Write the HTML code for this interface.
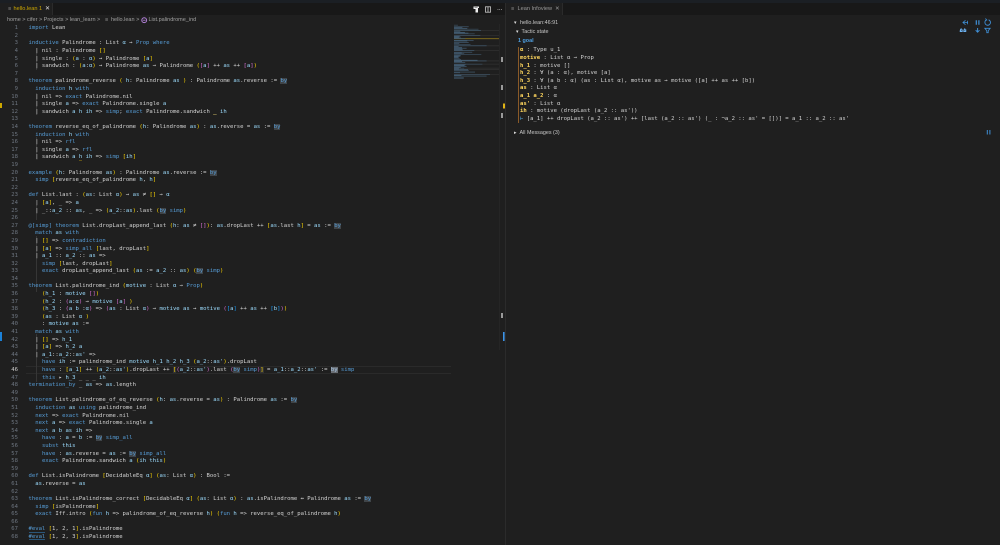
<!DOCTYPE html>
<html><head><meta charset="utf-8"><style>
html,body{margin:0;padding:0;width:1000px;height:545px;overflow:hidden;background:#1f1f1f}
*{box-sizing:border-box}
.abs{position:absolute}
.mono{font-family:"DejaVu Sans Mono","Liberation Mono",monospace;font-size:5.58px;line-height:7.59px;white-space:pre;color:#d4d4d4;filter:blur(.2px)}
.sans{font-family:"Liberation Sans","DejaVu Sans",sans-serif;white-space:pre;filter:blur(.2px)}
b,i,u,s,em,tt,mark{font:inherit;text-decoration:none;font-weight:normal;font-style:normal}
b{color:#569cd6} i{color:#9cdcfe} u{color:#ffd700} s{color:#da70d6} em{color:#179fff} tt{color:#4fa3d8}
mark{background:#3f4448;color:#569cd6}
.un{background:linear-gradient(#7d6a14,#7d6a14) bottom/100% .7px no-repeat}
.ub{background:linear-gradient(#2f6fa3,#2f6fa3) bottom/100% .7px no-repeat}
.y{color:#ffd75e;font-weight:bold}
</style></head><body>
<div class="abs" style="left:0;top:0;width:1000px;height:3px;background:#1b1f24"></div>
<div class="abs" style="left:0;top:3px;width:1000px;height:12px;background:#181818"></div>
<div class="abs" style="left:0;top:3px;width:53px;height:12px;background:#1f1f1f;border-right:.5px solid #2b2b2b"></div>
<div class="abs" style="left:505px;top:3px;width:58px;height:12px;background:#1f1f1f;border-left:.5px solid #2b2b2b;border-right:.5px solid #2b2b2b"></div>
<div class="abs sans" style="left:8px;top:5px;font-size:5.4px;line-height:8px;color:#9a9a9a">≡</div>
<div class="abs sans" style="left:13.5px;top:5px;font-size:5.6px;line-height:8px;color:#cca700">hello.lean 1</div>
<div class="abs sans" style="left:45px;top:5px;font-size:6px;line-height:8px;color:#ddd">✕</div>
<div class="abs sans" style="left:511px;top:5px;font-size:5.4px;line-height:8px;color:#9a9a9a">≡</div>
<div class="abs sans" style="left:517.5px;top:5px;font-size:5.6px;line-height:8px;color:#999">Lean Infoview</div>
<div class="abs sans" style="left:555px;top:5px;font-size:5.5px;line-height:8px;color:#999">✕</div>
<svg class="abs" style="left:470px;top:4px" width="34" height="11" viewBox="0 0 34 11">
<path d="M3.5 2.5h5.5v1.5h-1v4.5h-2.5v-3.5h-2z" fill="#eee"/><rect x="4.5" y="3" width="3" height="1" fill="#999"/>
<rect x="15.5" y="2.8" width="5" height="5.4" fill="none" stroke="#ccc" stroke-width=".8"/><path d="M18 2.8v5.4" stroke="#ccc" stroke-width=".8"/>
<path d="M27.5 5.5h.9M29.2 5.5h.9M31 5.5h.9" stroke="#aaa" stroke-width=".8"/>
</svg>
<div class="abs sans" style="left:7px;top:16.3px;font-size:5.5px;line-height:8px;color:#a0a0a0">home &gt; cifer &gt; Projects &gt; lean_learn &gt;</div>
<div class="abs sans" style="left:105px;top:16.3px;font-size:5.5px;line-height:8px;color:#a0a0a0">≡</div>
<div class="abs sans" style="left:111px;top:16.3px;font-size:5.5px;line-height:8px;color:#a0a0a0">hello.lean &gt;</div>
<svg class="abs" style="left:141px;top:17px" width="7" height="7"><circle cx="3.2" cy="3.2" r="2.4" fill="none" stroke="#b180d7" stroke-width="1"/><path d="M1.8 3.2h2.8" stroke="#b180d7" stroke-width=".8"/></svg>
<div class="abs sans" style="left:148.5px;top:16.3px;font-size:5.5px;line-height:8px;color:#a0a0a0">List.palindrome_ind</div>

<div class="abs" style="left:0;top:103px;width:1.5px;height:5px;background:#cca700"></div>
<div class="abs" style="left:0;top:332px;width:1.5px;height:9px;background:#1b81d8"></div>

<div class="abs" style="left:26px;top:365.6px;width:425px;height:8.2px;border-top:.5px solid #2a2a2a;border-bottom:.5px solid #2a2a2a"></div>
<div class="abs" style="left:35.5px;top:48px;width:.5px;height:22px;background:#363636"></div>
<div class="abs" style="left:35.5px;top:93px;width:.5px;height:22px;background:#363636"></div>
<div class="abs" style="left:35.5px;top:137px;width:.5px;height:22px;background:#363636"></div>
<div class="abs" style="left:35.5px;top:205px;width:.5px;height:15px;background:#363636"></div>
<div class="abs" style="left:35.5px;top:236px;width:.5px;height:56px;background:#363636"></div>
<div class="abs" style="left:35.5px;top:334px;width:.5px;height:48px;background:#363636"></div>

<div class="abs mono" style="left:0;top:25.3px;width:18px;text-align:right;color:#6e7681">1
2
3
4
5
6
7
8
9
10
11
12
13
14
15
16
17
18
19
20
21
22
23
24
25
26
27
28
29
30
31
32
33
34
35
36
37
38
39
40
41
42
43
44
45
<span style="color:#ccc">46</span>
47
48
49
50
51
52
53
54
55
56
57
58
59
60
61
62
63
64
65
66
67
68</div>

<div class="abs mono" style="left:28.5px;top:25.3px"><b>import</b> Lean

<b>inductive</b> Palindrome : List <i>α</i> → <b>Prop</b> <b>where</b>
  | nil : Palindrome <u>[]</u>
  | single : <u>(</u><i>a</i> : <i>α</i><u>)</u> → Palindrome <u>[</u><i>a</i><u>]</u>
  | sandwich : <u>(</u><i>a</i>:<i>α</i><u>)</u> → Palindrome <i>as</i> → Palindrome <u>(</u><s>[</s><i>a</i><s>]</s> ++ <i>as</i> ++ <s>[</s><i>a</i><s>]</s><u>)</u>

<b>theorem</b> palindrome_reverse <u>(</u> <i>h</i>: Palindrome <i>as</i> <u>)</u> : Palindrome <i>as</i>.reverse := <mark>by</mark>
  <b>induction</b> <i>h</i> <b>with</b>
  | nil =&gt; <b>exact</b> Palindrome.nil
  | single <i>a</i> =&gt; <b>exact</b> Palindrome.single <i>a</i>
  | sandwich <i>a</i> <i>h</i> <i>ih</i> =&gt; <b>simp</b>; <b>exact</b> Palindrome.sandwich <span class="un">_</span> <i>ih</i>

<b>theorem</b> reverse_eq_of_palindrome <u>(</u><i>h</i>: Palindrome <i>as</i><u>)</u> : <i>as</i>.reverse = <i>as</i> := <mark>by</mark>
  <b>induction</b> <i>h</i> <b>with</b>
  | nil =&gt; <b>rfl</b>
  | single <i>a</i> =&gt; <b>rfl</b>
  | sandwich <i>a</i> <i class="un">h</i> <i>ih</i> =&gt; <b>simp</b> <u>[</u><i>ih</i><u>]</u>

<b>example</b> <u>(</u><i>h</i>: Palindrome <i>as</i><u>)</u> : Palindrome <i>as</i>.reverse := <mark>by</mark>
  <b>simp</b> <u>[</u>reverse_eq_of_palindrome <i>h</i>, <i>h</i><u>]</u>

<b>def</b> List.last : <u>(</u><i>as</i>: List <i>α</i><u>)</u> → <i>as</i> ≠ <u>[]</u> → <i>α</i>
  | <u>[</u><i>a</i><u>]</u>, _ =&gt; <i>a</i>
  | _::<i>a_2</i> :: <i>as</i>, _ =&gt; <u>(</u><i>a_2</i>::<i>as</i><u>)</u>.last <u>(</u><mark>by</mark> <b>simp</b><u>)</u>

<b>@[simp]</b> <b>theorem</b> List.dropLast_append_last <u>(</u><i>h</i>: <i>as</i> ≠ <s>[]</s><u>)</u>: <i>as</i>.dropLast ++ <u>[</u><i>as</i>.last <i>h</i><u>]</u> = <i>as</i> := <mark>by</mark>
  <b>match</b> <i>as</i> <b>with</b>
  | <u>[]</u> =&gt; <b>contradiction</b>
  | <u>[</u><i>a</i><u>]</u> =&gt; <b>simp_all</b> <u>[</u>last, dropLast<u>]</u>
  | <i>a_1</i> :: <i>a_2</i> :: <i>as</i> =&gt;
    <b>simp</b> <u>[</u>last, dropLast<u>]</u>
    <b>exact</b> dropLast_append_last <u>(</u><i>as</i> := <i>a_2</i> :: <i>as</i><u>)</u> <u>(</u><mark>by</mark> <b>simp</b><u>)</u>

<b>theorem</b> List.palindrome_ind <u>(</u><i>motive</i> : List <i>α</i> → <b>Prop</b><u>)</u>
    <u>(</u><i>h_1</i> : <i>motive</i> <s>[]</s><u>)</u>
    <u>(</u><i>h_2</i> : <s>(</s><i>a</i>:<i>α</i><s>)</s> → <i>motive</i> <s>[</s><i>a</i><s>]</s> <u>)</u>
    <u>(</u><i>h_3</i> : <s>(</s><i>a b</i> :<i>α</i><s>)</s> =&gt; <s>(</s><i>as</i> : List <i>α</i><s>)</s> → <i>motive</i> <i>as</i> → <i>motive</i> <s>(</s><em>[</em><i>a</i><em>]</em> ++ <i>as</i> ++ <em>[</em><i>b</i><em>]</em><s>)</s><u>)</u>
    <u>(</u><i>as</i> : List <i>α</i> <u>)</u>
    : <i>motive</i> <i>as</i> :=
  <b>match</b> <i>as</i> <b>with</b>
  | <u>[]</u> =&gt; <i>h_1</i>
  | <u>[</u><i>a</i><u>]</u> =&gt; <i>h_2</i> <i>a</i>
  | <i>a_1</i>::<i>a_2</i>::<i>as'</i> =&gt;
    <b>have</b> <i>ih</i> := palindrome_ind <i>motive</i> <i>h_1</i> <i>h_2</i> <i>h_3</i> <u>(</u><i>a_2</i>::<i>as'</i><u>)</u>.dropLast
    <b>have</b> : <u>[</u><i>a_1</i><u>]</u> ++ <u>(</u><i>a_2</i>::<i>as'</i><u>)</u>.dropLast ++ <u style="background:#333">[</u><s>(</s><i>a_2</i>::<i>as'</i><s>)</s>.last <s>(</s><mark>by</mark> <b>simp</b><s>)</s><u style="background:#333">]</u> = <i>a_1</i>::<i>a_2</i>::<i>as'</i> := <mark style="background:#6a6f75;color:#a8c8e8">by</mark> <b>simp</b>
    <b>this</b> ▸ <i>h_3</i> _ _ _ <i>ih</i>
<b>termination_by</b> _ <i>as</i> =&gt; <i>as</i>.length

<b>theorem</b> List.palindrome_of_eq_reverse <u>(</u><i>h</i>: <i>as</i>.reverse = <i>as</i><u>)</u> : Palindrome <i>as</i> := <mark>by</mark>
  <b>induction</b> <i>as</i> <b>using</b> palindrome_ind
  <b>next</b> =&gt; <b>exact</b> Palindrome.nil
  <b>next</b> <i>a</i> =&gt; <b>exact</b> Palindrome.single <i>a</i>
  <b>next</b> <i>a b as ih</i> =&gt;
    <b>have</b> : <i>a</i> = <i>b</i> := <mark>by</mark> <b>simp_all</b>
    <b>subst</b> <i>this</i>
    <b>have</b> : <i>as</i>.reverse = <i>as</i> := <mark>by</mark> <b>simp_all</b>
    <b>exact</b> Palindrome.sandwich <i>a</i> <u>(</u><i>ih this</i><u>)</u>

<b>def</b> List.isPalindrome <u>[</u>DecidableEq <i>α</i><u>]</u> <u>(</u><i>as</i>: List <i>α</i><u>)</u> : Bool :=
  <i>as</i>.reverse = <i>as</i>

<b>theorem</b> List.isPalindrome_correct <u>[</u>DecidableEq <i>α</i><u>]</u> <u>(</u><i>as</i>: List <i>α</i><u>)</u> : <i>as</i>.isPalindrome ↔ Palindrome <i>as</i> := <mark>by</mark>
  <b>simp</b> <u>[</u>isPalindrome<u>]</u>
  <b>exact</b> Iff.intro <u>(</u><b>fun</b> <i>h</i> =&gt; palindrome_of_eq_reverse <i>h</i><u>)</u> <u>(</u><b>fun</b> <i>h</i> =&gt; reverse_eq_of_palindrome <i>h</i><u>)</u>

<b class="ub">#eval</b> <u>[</u>1, 2, 1<u>]</u>.isPalindrome
<b class="ub">#eval</b> <u>[</u>1, 2, 3<u>]</u>.isPalindrome</div>

<svg class="abs" style="left:0;top:0" width="510" height="350" viewBox="0 0 510 350">
<g transform="translate(0,.6) scale(1,.97)">
<path d="M454 31h45M454 36h45M454 46.6h45M454 51.6h45M454 62.2h45M454 65.5h45M454 69.6h45M454 71.2h45M454 76.2h45" stroke="#303030" stroke-width=".8"/>
<path d="M454 39.3h45" stroke="#86701c" stroke-width=".9"/>
<path stroke="#46627a" stroke-width=".6" fill="none" d="M454 25.3h3.9M454 27h14.7M454 27.8h8.4M454 28.6h13.3M454 29.4h24.5M454 31h27M454 31.9h6.3M454 32.7h10.9M454 33.5h14.4M454 34.3h20.7M454 36h26.3M454 36.8h6.3M454 37.6h4.9M454 38.4h6.7M454 39.3h11.2M454 40.9h19.6M454 41.7h13.3M454 43.4h14.7M454 44.2h5.3M454 45h16.5M454 46.6h32.6M454 47.5h4.6M454 48.3h8M454 49.1h12.6M454 49.9h8M454 50.7h8.8M454 51.6h20.3M454 53.2h18.2M454 54h7.7M454 54.8h10.2M454 55.7h27.3M454 56.5h6.7M454 57.3h6.3M454 58.1h4.6M454 58.9h4.6M454 59.8h5.6M454 60.6h7M454 61.4h23.5M454 62.2h32.6M454 63h8M454 63.9h11.2M454 65.5h28.4M454 66.3h11.6M454 67.1h10.5M454 68h12.6M454 68.8h6.7M454 69.6h10.2M454 70.4h4.9M454 71.2h14M454 72.1h14.7M454 73.7h21M454 74.5h6M454 76.2h36M454 77h7.4M454 77.8h32.6M454 79.4h9.8M454 80.3h9.8"/>
</g>
<path d="M499.5 24V350" stroke="#2a2a2a" stroke-width=".6"/>
<rect x="501" y="57" width="2" height="5" fill="#9a9a9a"/>
<rect x="501" y="85" width="2" height="5" fill="#9a9a9a"/>
<rect x="501" y="113" width="2" height="5" fill="#9a9a9a"/>
<rect x="503" y="103.5" width="2" height="5" fill="#e0b416"/>
<rect x="501" y="313" width="2" height="5" fill="#9a9a9a"/>
<rect x="503" y="332" width="1.6" height="9" fill="#3d94e8"/>
</svg>
<div class="abs" style="left:504.5px;top:15px;width:.5px;height:530px;background:#2b2b2b"></div>

<div class="abs sans" style="left:514px;top:18.7px;font-size:5px;line-height:8px;color:#ddd">▾</div>
<div class="abs sans" style="left:520px;top:18.7px;font-size:5.4px;line-height:8px;color:#c8c8c8">hello.lean:46:91</div>
<div class="abs sans" style="left:516px;top:28px;font-size:5px;line-height:8px;color:#ddd">▾</div>
<div class="abs sans" style="left:521.5px;top:28px;font-size:5.4px;line-height:8px;color:#c8c8c8">Tactic state</div>
<div class="abs sans" style="left:518px;top:36.7px;font-size:5.4px;line-height:8px;color:#4f9fe0;font-weight:bold">1 goal</div>
<div class="abs" style="left:518px;top:47px;width:.7px;height:76px;background:#8a5a28"></div>
<div class="abs mono" style="left:520px;top:47.4px"><span class="y">α</span> : Type u_1
<span class="y">motive</span> : List α → Prop
<span class="y">h_1</span> : motive []
<span class="y">h_2</span> : ∀ (a : α), motive [a]
<span class="y">h_3</span> : ∀ (a b : α) (as : List α), motive as → motive ([a] ++ as ++ [b])
<span class="y">as</span> : List α
<span class="y">a_1 a_2</span> : α
<span class="y">as'</span> : List α
<span class="y">ih</span> : motive (dropLast (a_2 :: as'))
<tt>⊢</tt> [a_1] ++ dropLast (a_2 :: as') ++ [last (a_2 :: as') (_ : ¬a_2 :: as' = [])] = a_1 :: a_2 :: as'</div>
<div class="abs sans" style="left:514px;top:128.7px;font-size:5px;line-height:8px;color:#ddd">▸</div>
<div class="abs sans" style="left:519.5px;top:128.7px;font-size:5.4px;line-height:8px;color:#c8c8c8">All Messages (3)</div>

<svg class="abs" style="left:958px;top:16px" width="36" height="22" viewBox="0 0 36 22" fill="none" stroke="#3f8fd6">
<path d="M10 6.5h-4.5M7.5 4.3l-2.6 2.2 2.6 2.2M9.5 4.8v3.4" stroke-width=".8"/>
<path d="M18.3 4.3v4.4M20.9 4.3v4.4" stroke-width="1.2"/>
<path d="M30.6 3.8a2.8 2.8 0 1 1-2.1.1M27.4 2.6l1.3 1.4-1.7.7" stroke-width=".9"/>
<path d="M3.6 12.6c-1 .5-1.3 1.3-1.3 2.8h1.8v-2M7.2 12.6c-1 .5-1.3 1.3-1.3 2.8h1.8v-2" stroke="#6db3f2" stroke-width="1.1"/>
<path d="M19.6 12v3.6M17.7 14.2l1.9 2 1.9-2" stroke-width="1"/>
<path d="M26.8 12.3h5.4l-2 2.4v2h-1.4v-2z" stroke-width=".8"/>
</svg>
<svg class="abs" style="left:985px;top:128px" width="8" height="9"><path d="M2.3 2v4.5M4.9 2v4.5" stroke="#3f8fd6" stroke-width="1"/></svg>
</body></html>
